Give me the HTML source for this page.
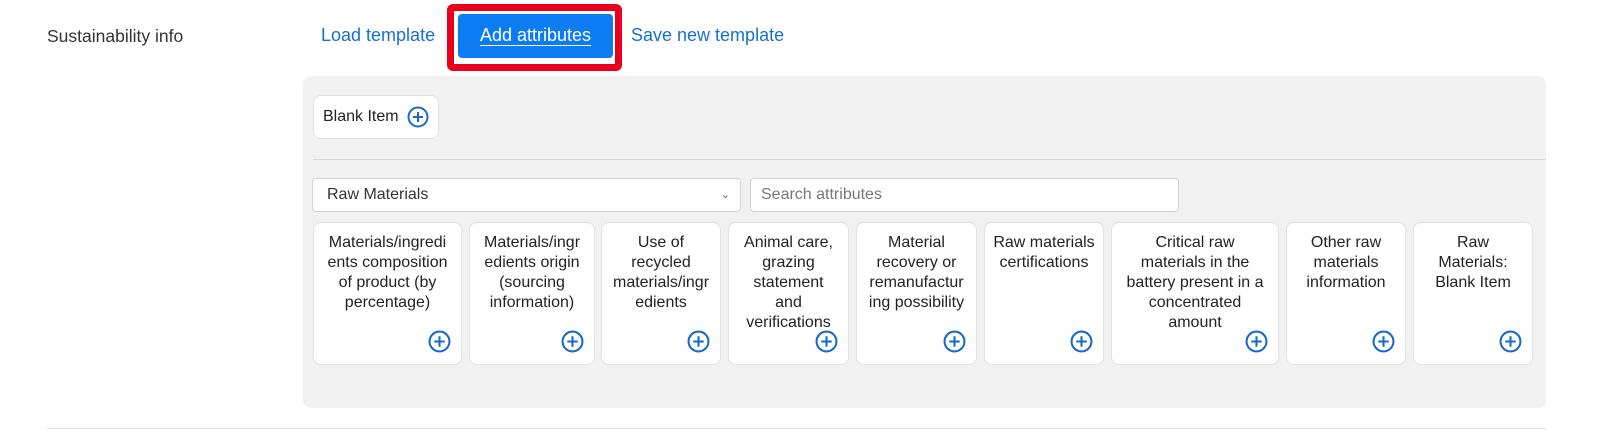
<!DOCTYPE html>
<html><head><style>
body{margin:0;width:1600px;height:433px;background:#fff;font-family:"Liberation Sans",sans-serif;position:relative;overflow:hidden}
.a{position:absolute}
.lnk{color:#1670d1;font-size:18px}
.card{position:absolute;top:222px;height:143px;background:#fff;border:1px solid #e2e2e2;border-radius:8px;box-sizing:border-box;text-align:center;font-size:16px;line-height:20px;color:#222;padding-top:10px}
.card svg{position:absolute;right:10px;bottom:11px}
</style></head><body>
<div class="a" style="left:47px;top:26px;font-size:17.5px;color:#333">Sustainability info</div>
<div class="a lnk" style="left:321px;top:25px">Load template</div>
<div class="a" style="left:447px;top:4px;width:175px;height:67px;border:7px solid #e8001c;border-radius:6px;box-sizing:border-box"></div>
<div class="a" style="left:458px;top:14px;width:155px;height:44px;background:#0d7cf2;border-radius:4px;color:#fff;font-size:18px;text-align:center;line-height:42px"><span style="text-decoration:underline;text-underline-offset:4px">Add attributes</span></div>
<div class="a lnk" style="left:631px;top:25px">Save new template</div>
<div class="a" style="left:303px;top:76px;width:1243px;height:332px;background:#f1f1f1;border-radius:8px"></div>
<div class="a" style="left:313px;top:95px;width:126px;height:44px;background:#fff;border:1px solid #e2e2e2;border-radius:8px;box-sizing:border-box;font-size:16px;line-height:42px;padding-left:9px;color:#222">Blank Item <svg style="position:absolute;left:93px;top:10px" width="22" height="22" viewBox="0 0 22 22"><circle cx="11" cy="11" r="9.5" fill="none" stroke="#1a6ac7" stroke-width="2"/><path d="M11 6v10M6 11h10" stroke="#1a6ac7" stroke-width="2"/></svg></div>
<div class="a" style="left:313px;top:159px;width:1233px;height:1px;background:#d6d6d6"></div>
<div class="a" style="left:312px;top:178px;width:429px;height:34px;background:#fff;border:1px solid #d3d3d3;border-radius:4px;box-sizing:border-box;font-size:16px;line-height:32px;padding-left:14px;color:#333">Raw Materials<span style="position:absolute;right:10px;top:0;color:#666;font-size:11px">&#8964;</span></div>
<div class="a" style="left:750px;top:178px;width:429px;height:34px;background:#fff;border:1px solid #d3d3d3;border-radius:4px;box-sizing:border-box;font-size:16px;line-height:32px;padding-left:10px;color:#777">Search attributes</div>
<div class="card" style="left:313px;width:149px">Materials/ingredi<br>ents composition<br>of product (by<br>percentage)<svg width="23" height="23" viewBox="0 0 22 22"><circle cx="11" cy="11" r="9.5" fill="none" stroke="#1a6ac7" stroke-width="2"/><path d="M11 6v10M6 11h10" stroke="#1a6ac7" stroke-width="2"/></svg></div>
<div class="card" style="left:469px;width:126px">Materials/ingr<br>edients origin<br>(sourcing<br>information)<svg width="23" height="23" viewBox="0 0 22 22"><circle cx="11" cy="11" r="9.5" fill="none" stroke="#1a6ac7" stroke-width="2"/><path d="M11 6v10M6 11h10" stroke="#1a6ac7" stroke-width="2"/></svg></div>
<div class="card" style="left:601px;width:120px">Use of<br>recycled<br>materials/ingr<br>edients<svg width="23" height="23" viewBox="0 0 22 22"><circle cx="11" cy="11" r="9.5" fill="none" stroke="#1a6ac7" stroke-width="2"/><path d="M11 6v10M6 11h10" stroke="#1a6ac7" stroke-width="2"/></svg></div>
<div class="card" style="left:728px;width:121px">Animal care,<br>grazing<br>statement<br>and<br>verifications<svg width="23" height="23" viewBox="0 0 22 22"><circle cx="11" cy="11" r="9.5" fill="none" stroke="#1a6ac7" stroke-width="2"/><path d="M11 6v10M6 11h10" stroke="#1a6ac7" stroke-width="2"/></svg></div>
<div class="card" style="left:856px;width:121px">Material<br>recovery or<br>remanufactur<br>ing possibility<svg width="23" height="23" viewBox="0 0 22 22"><circle cx="11" cy="11" r="9.5" fill="none" stroke="#1a6ac7" stroke-width="2"/><path d="M11 6v10M6 11h10" stroke="#1a6ac7" stroke-width="2"/></svg></div>
<div class="card" style="left:984px;width:120px">Raw materials<br>certifications<svg width="23" height="23" viewBox="0 0 22 22"><circle cx="11" cy="11" r="9.5" fill="none" stroke="#1a6ac7" stroke-width="2"/><path d="M11 6v10M6 11h10" stroke="#1a6ac7" stroke-width="2"/></svg></div>
<div class="card" style="left:1111px;width:168px">Critical raw<br>materials in the<br>battery present in a<br>concentrated<br>amount<svg width="23" height="23" viewBox="0 0 22 22"><circle cx="11" cy="11" r="9.5" fill="none" stroke="#1a6ac7" stroke-width="2"/><path d="M11 6v10M6 11h10" stroke="#1a6ac7" stroke-width="2"/></svg></div>
<div class="card" style="left:1286px;width:120px">Other raw<br>materials<br>information<svg width="23" height="23" viewBox="0 0 22 22"><circle cx="11" cy="11" r="9.5" fill="none" stroke="#1a6ac7" stroke-width="2"/><path d="M11 6v10M6 11h10" stroke="#1a6ac7" stroke-width="2"/></svg></div>
<div class="card" style="left:1413px;width:120px">Raw<br>Materials:<br>Blank Item<svg width="23" height="23" viewBox="0 0 22 22"><circle cx="11" cy="11" r="9.5" fill="none" stroke="#1a6ac7" stroke-width="2"/><path d="M11 6v10M6 11h10" stroke="#1a6ac7" stroke-width="2"/></svg></div>
<div class="a" style="left:47px;top:428px;width:1499px;height:1px;background:#e0e0e0"></div>
</body></html>
